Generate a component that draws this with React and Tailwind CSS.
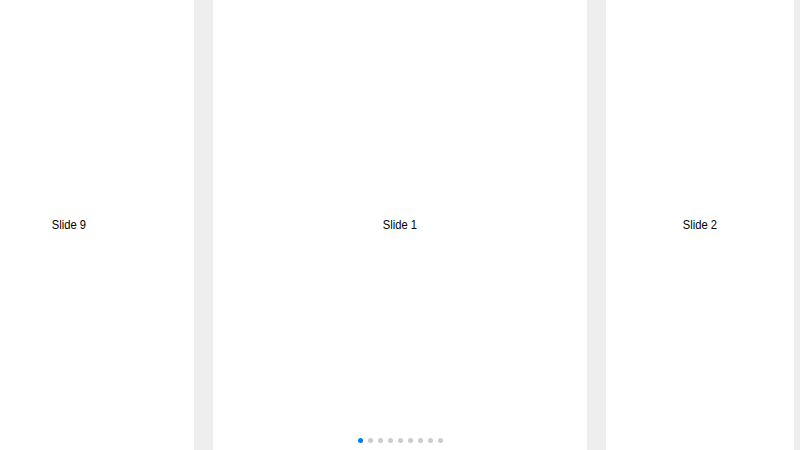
function Label({ children }) {
  return <span className="inline-block scale-x-[0.86] text-[13px] leading-none mb-[2px]">{children}</span>;
}

export default function App() {
  return (
    <div
      className="relative w-[800px] h-[450px] overflow-hidden bg-[#eeeeee] text-black"
      style={{ fontFamily: '"Liberation Sans", Arial, Helvetica, sans-serif' }}
    >
      <div className="flex h-full gap-[19px] ml-[-56px]">
        <div className="w-[250px] shrink-0 h-full bg-white flex items-center justify-center">
          <Label>Slide 9</Label>
        </div>
        <div className="w-[374px] shrink-0 h-full bg-white flex items-center justify-center">
          <Label>Slide 1</Label>
        </div>
        <div className="w-[188px] shrink-0 h-full bg-white flex items-center justify-center">
          <Label>Slide 2</Label>
        </div>
      </div>
      <div className="absolute left-0 right-0 bottom-[7px] flex justify-center gap-[5px]">
        <span className="w-[5px] h-[5px] rounded-full bg-[#007aff]" />
        {[0, 1, 2, 3, 4, 5, 6, 7].map((i) => (
          <span key={i} className="w-[5px] h-[5px] rounded-full bg-[#cccccc]" />
        ))}
      </div>
    </div>
  );
}
